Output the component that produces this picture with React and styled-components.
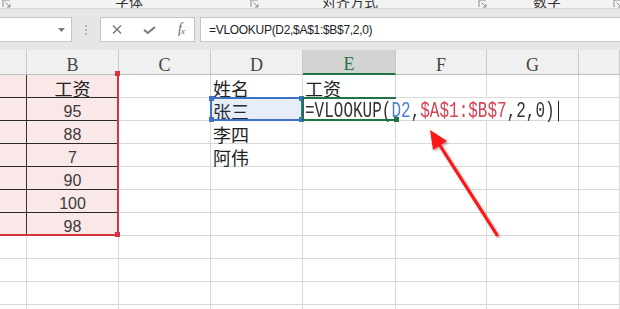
import React from 'react';
import styled, { createGlobalStyle } from 'styled-components';

const GlobalStyle = createGlobalStyle`
  html, body {
    margin: 0;
    padding: 0;
    background: #fff;
  }
  body {
    width: 620px;
    height: 309px;
    overflow: hidden;
    font-family: "Liberation Sans", "Noto Sans CJK SC", sans-serif;
  }
`;

const Window = styled.div`
  position: relative;
  width: 620px;
  height: 309px;
  overflow: hidden;
  background: #fff;
`;

/* ---------- ribbon (only its bottom edge shows) ---------- */

const Ribbon = styled.div`
  height: 8px;
  background: #f3f3f3;
  border-bottom: 1px solid #d6d6d6;
  display: flex;
  align-items: flex-end;
  overflow: hidden;
`;

const GroupLabel = styled.span`
  flex: none;
  margin-left: ${p => p.$left}px;
  width: ${p => p.$width}px;
  font-family: "Noto Sans CJK SC", sans-serif;
  font-size: 14px;
  line-height: 14px;
  color: #333;
  text-align: center;
  white-space: nowrap;
`;

const LauncherBox = styled.span`
  flex: none;
  display: flex;
  margin-left: ${p => p.$left}px;
  width: 9px;
  height: 9px;
`;

const Launcher = ({ left }) => (
  <LauncherBox $left={left}>
    <svg width="9" height="9" viewBox="0 0 9 9" fill="none" stroke="#8c8c8c" strokeWidth="1">
      <path d="M1 8V1h7" />
      <path d="M3.5 3.5 8 8M5 8h3V5" />
    </svg>
  </LauncherBox>
);

/* ---------- formula bar ---------- */

const FormulaBar = styled.div`
  height: 41px;
  box-sizing: border-box;
  padding: 8px 0;
  background: #e6e6e6;
  display: flex;
`;

const NameBox = styled.div`
  width: 72px;
  box-sizing: border-box;
  background: #fff;
  border: 1px solid #c6c6c6;
  border-left: none;
  display: flex;
  align-items: center;
  justify-content: flex-end;
  padding-right: 6px;
`;

const Grip = styled.div`
  width: 28px;
  display: flex;
  flex-direction: column;
  align-items: center;
  justify-content: center;
  gap: 2px;
  span {
    width: 2px;
    height: 2px;
    background: #b3b3b3;
  }
`;

const ButtonBox = styled.div`
  width: 95px;
  box-sizing: border-box;
  background: #fff;
  border: 1px solid #c6c6c6;
  display: grid;
  grid-template-columns: repeat(3, 32px);
  align-items: center;
  justify-items: center;
`;

const Fx = styled.span`
  font-family: "Liberation Serif", serif;
  font-style: italic;
  color: #6a6a6a;
  font-size: 14px;
  line-height: 14px;
  letter-spacing: -1px;
  sub {
    font-size: 9px;
    vertical-align: -1px;
  }
`;

const FormulaInput = styled.div`
  flex: 1;
  margin-left: 5px;
  background: #fff;
  border: 1px solid #c6c6c6;
  border-right: none;
  display: flex;
  align-items: center;
  padding-left: 8px;
  font-family: "Liberation Sans", sans-serif;
  font-size: 12px;
  letter-spacing: -0.3px;
  color: #222;
`;

/* ---------- sheet ---------- */

const Sheet = styled.div`
  display: grid;
  grid-template-columns: 27px 92px 92px 92px 93px 91px 92px 1fr;
  grid-template-rows: 25px repeat(11, 23px);
`;

const ColHead = styled.div`
  grid-column: ${p => p.$col};
  grid-row: 1;
  box-sizing: border-box;
  display: flex;
  align-items: flex-end;
  justify-content: center;
  background: ${p => (p.$active ? '#d3d3d3' : '#f0f0f0')};
  border-right: 1px solid #c8c8c8;
  border-bottom: ${p => (p.$active ? '2px solid #217346' : '1px solid #bdbdbd')};
  font-family: "Liberation Serif", serif;
  font-size: 18px;
  line-height: 18px;
  color: ${p => (p.$active ? '#217346' : '#444')};
`;

const Cell = styled.div`
  grid-column: ${p => p.$col};
  grid-row: ${p => p.$row};
  box-sizing: border-box;
  min-width: 0;
  display: flex;
  align-items: flex-end;
  justify-content: ${p => (p.$center ? 'center' : 'flex-start')};
  padding-left: ${p => (p.$center ? 0 : 2)}px;
  background: ${p => (p.$pink ? '#fae7e8' : '#fff')};
  border-right: 1px solid ${p => (p.$pink ? '#333' : '#d9d9d9')};
  border-bottom: 1px solid ${p => (p.$pink ? '#2a2a2a' : '#d9d9d9')};
  font-family: ${p => (p.$cjk ? '"Noto Sans CJK SC", sans-serif' : '"Liberation Sans", sans-serif')};
  font-size: ${p => (p.$cjk ? 18 : 16)}px;
  line-height: ${p => (p.$cjk ? 18 : 16)}px;
  color: ${p => (p.$cjk ? '#222' : '#3a3a3a')};
  white-space: nowrap;
`;

const EditCell = styled.div`
  grid-column: 5 / span 3;
  grid-row: 3;
  box-sizing: border-box;
  display: flex;
  align-items: flex-end;
  padding-left: 2px;
  background: #fff;
  border-right: 1px solid #d9d9d9;
  border-bottom: 1px solid #d9d9d9;
`;

const EditText = styled.span`
  display: inline-block;
  font-family: "Liberation Mono", monospace;
  font-size: 16px;
  line-height: 14px;
  color: #333;
  white-space: nowrap;
  transform: scaleY(1.38);
  transform-origin: 0 11.3px;
`;

const Token = styled.span`
  color: ${p => (p.$tone === 'blue' ? '#4a7fd4' : p.$tone === 'red' ? '#d8414f' : 'inherit')};
`;

const Caret = styled.span`
  display: inline-block;
  width: 1px;
  height: 15px;
  margin-left: 3px;
  background: #222;
  vertical-align: -3px;
`;

const RangeMark = styled.div`
  grid-column: ${p => p.$col};
  grid-row: ${p => p.$row};
  position: relative;
  z-index: 2;
  margin: -1px 0 0 -1px;
  pointer-events: none;
  background: ${p => p.$tint || 'transparent'};
  border-style: solid;
  border-color: ${p => p.$color};
  border-width: ${p => p.$widths};
`;

const Handle = styled.span`
  position: absolute;
  width: 5px;
  height: 5px;
  background: ${p => p.$color};
  ${p => (p.$corner.includes('t') ? 'top: -3px;' : 'bottom: -3px;')}
  ${p => (p.$corner.includes('l') ? 'left: -3px;' : 'right: -3px;')}
`;

const ArrowLayer = styled.svg`
  position: absolute;
  left: 0;
  top: 0;
  z-index: 5;
  pointer-events: none;
`;

const COLS = ['A', 'B', 'C', 'D', 'E', 'F', 'G', 'H'];

const ROWS = [
  { B: '工资', D: '姓名', E: '工资' },
  { B: '95', D: '张三' },
  { B: '88', D: '李四' },
  { B: '7', D: '阿伟' },
  { B: '90' },
  { B: '100' },
  { B: '98' },
  {}, {}, {}, {}
];

const FORMULA = [
  ['=VLOOKUP(', null],
  ['D2', 'blue'],
  [',', null],
  ['$A$1:$B$7', 'red'],
  [',2,0)', null]
];

const isCjk = s => /[\u4e00-\u9fff]/.test(s);

function App() {
  const cells = [];
  ROWS.forEach((row, i) => {
    const r = i + 1;
    COLS.forEach((c, ci) => {
      if (r === 2 && ci >= 4 && ci <= 6) return;
      const text = row[c] || '';
      cells.push(
        <Cell
          key={c + r}
          $col={ci + 1}
          $row={r + 1}
          $pink={r <= 7 && ci <= 1}
          $center={c === 'B'}
          $cjk={isCjk(text)}
        >
          {text}
        </Cell>
      );
    });
  });

  return (
    <Window>
      <GlobalStyle />
      <Ribbon>
        <Launcher left={2} />
        <GroupLabel $left={98} $width={40}>字体</GroupLabel>
        <Launcher left={101} />
        <GroupLabel $left={61} $width={60}>对齐方式</GroupLabel>
        <Launcher left={98} />
        <GroupLabel $left={40} $width={40}>数字</GroupLabel>
        <Launcher left={46} />
      </Ribbon>

      <FormulaBar>
        <NameBox>
          <svg width="7" height="4" viewBox="0 0 7 4">
            <path d="M0 0h7L3.5 4z" fill="#7a7a7a" />
          </svg>
        </NameBox>
        <Grip><span /><span /><span /></Grip>
        <ButtonBox>
          <svg width="10" height="9" viewBox="0 0 10 9" fill="none" stroke="#777" strokeWidth="1.4">
            <path d="M1 0.5l8 8M9 0.5l-8 8" />
          </svg>
          <svg width="13" height="8" viewBox="0 0 13 8" fill="none" stroke="#7a7a7a" strokeWidth="2">
            <path d="M1 3.8l3.8 3.2L12 1" />
          </svg>
          <Fx>f<sub>x</sub></Fx>
        </ButtonBox>
        <FormulaInput>=VLOOKUP(D2,$A$1:$B$7,2,0)</FormulaInput>
      </FormulaBar>

      <Sheet>
        {COLS.map((c, ci) => (
          <ColHead key={c} $col={ci + 1} $active={c === 'E'}>
            {c === 'A' || c === 'H' ? '' : c}
          </ColHead>
        ))}
        {cells}
        <EditCell>
          <EditText>
            {FORMULA.map(([t, tone], i) => (
              <Token key={i} $tone={tone}>{t}</Token>
            ))}
            <Caret />
          </EditText>
        </EditCell>

        <RangeMark $col="1 / span 2" $row="2 / span 7" $color="#d6333f" $widths="0 2px 2px 0">
          <Handle $color="#d6333f" $corner="tr" />
          <Handle $color="#d6333f" $corner="br" />
        </RangeMark>
        <RangeMark $col="4" $row="3" $color="#3f73c8" $widths="2px" $tint="rgba(63, 115, 200, 0.12)">
          <Handle $color="#3f73c8" $corner="tl" />
          <Handle $color="#3f73c8" $corner="tr" />
          <Handle $color="#3f73c8" $corner="bl" />
          <Handle $color="#3f73c8" $corner="br" />
        </RangeMark>
        <RangeMark $col="5" $row="3" $color="#217346" $widths="2px 0 2px 2px">
          <Handle $color="#217346" $corner="br" />
        </RangeMark>
      </Sheet>

      <ArrowLayer width="620" height="309" viewBox="0 0 620 309">
        <defs>
          <filter id="arrowShadow" x="-20%" y="-20%" width="140%" height="140%">
            <feDropShadow dx="1.5" dy="1.5" stdDeviation="1" floodColor="#000" floodOpacity="0.35" />
          </filter>
        </defs>
        <g filter="url(#arrowShadow)">
          <line x1="497" y1="235" x2="439" y2="144" stroke="#ff1414" strokeWidth="3.2" strokeLinecap="round" />
          <polygon points="430,130 447,141 433,150" fill="#ff1414" />
        </g>
      </ArrowLayer>
    </Window>
  );
}

export default App;
